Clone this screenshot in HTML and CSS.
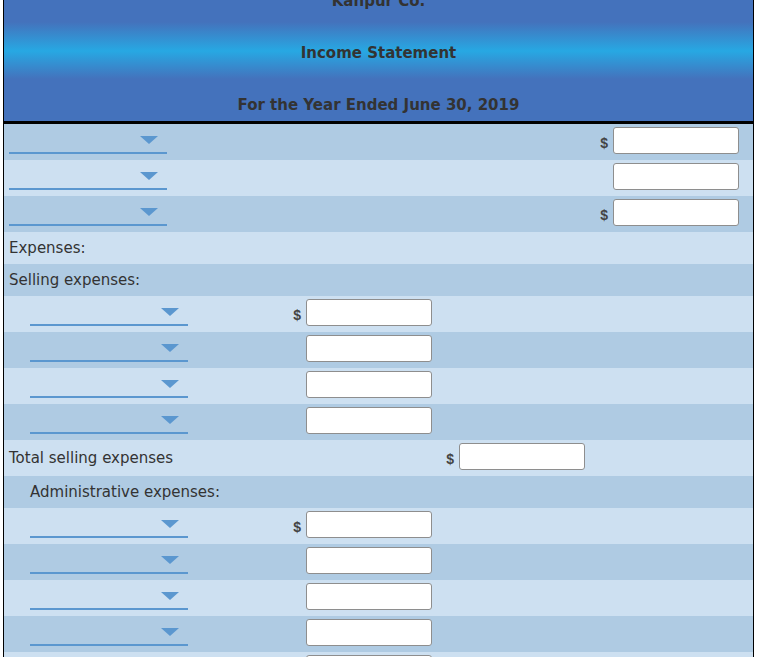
FILE: index.html
```html
<!DOCTYPE html>
<html>
<head>
<meta charset="utf-8">
<title>Income Statement</title>
<link rel="stylesheet" href="styles.css">
</head>
<body>
<div class="sheet">
  <div class="head">
    <div class="titles">
      <div class="title">Kanpur Co.</div>
      <div class="title">Income Statement</div>
      <div class="title">For the Year Ended June 30, 2019</div>
    </div>
  </div>
  <div class="rows">
    <div class="row">
      <div class="label"><div class="select"><span class="tri"></span></div></div>
      <div class="cell"></div><div class="cell"></div>
      <div class="cell"><span class="dollar">$</span><input class="amt" type="text"></div>
    </div>
    <div class="row">
      <div class="label"><div class="select"><span class="tri"></span></div></div>
      <div class="cell"></div><div class="cell"></div>
      <div class="cell"><input class="amt" type="text"></div>
    </div>
    <div class="row">
      <div class="label"><div class="select"><span class="tri"></span></div></div>
      <div class="cell"></div><div class="cell"></div>
      <div class="cell"><span class="dollar">$</span><input class="amt" type="text"></div>
    </div>
    <div class="row short">
      <div class="label"><span class="text">Expenses:</span></div>
    </div>
    <div class="row short">
      <div class="label"><span class="text">Selling expenses:</span></div>
    </div>
    <div class="row">
      <div class="label indent"><div class="select"><span class="tri"></span></div></div>
      <div class="cell"><span class="dollar">$</span><input class="amt" type="text"></div>
    </div>
    <div class="row">
      <div class="label indent"><div class="select"><span class="tri"></span></div></div>
      <div class="cell"><input class="amt" type="text"></div>
    </div>
    <div class="row">
      <div class="label indent"><div class="select"><span class="tri"></span></div></div>
      <div class="cell"><input class="amt" type="text"></div>
    </div>
    <div class="row">
      <div class="label indent"><div class="select"><span class="tri"></span></div></div>
      <div class="cell"><input class="amt" type="text"></div>
    </div>
    <div class="row">
      <div class="label"><span class="text">Total selling expenses</span></div>
      <div class="cell"></div>
      <div class="cell"><span class="dollar">$</span><input class="amt" type="text"></div>
    </div>
    <div class="row short">
      <div class="label indent"><span class="text">Administrative expenses:</span></div>
    </div>
    <div class="row">
      <div class="label indent"><div class="select"><span class="tri"></span></div></div>
      <div class="cell"><span class="dollar">$</span><input class="amt" type="text"></div>
    </div>
    <div class="row">
      <div class="label indent"><div class="select"><span class="tri"></span></div></div>
      <div class="cell"><input class="amt" type="text"></div>
    </div>
    <div class="row">
      <div class="label indent"><div class="select"><span class="tri"></span></div></div>
      <div class="cell"><input class="amt" type="text"></div>
    </div>
    <div class="row">
      <div class="label indent"><div class="select"><span class="tri"></span></div></div>
      <div class="cell"><input class="amt" type="text"></div>
    </div>
    <div class="row">
      <div class="label indent"><div class="select"><span class="tri"></span></div></div>
      <div class="cell"><input class="amt" type="text"></div>
    </div>
  </div>
</div>
</body>
</html>
```
FILE: styles.css
```css
html, body {
  margin: 0;
  padding: 0;
  background: #ffffff;
}

body {
  font-family: "DejaVu Sans", Verdana, sans-serif;
  color: #333333;
  overflow: hidden;
}

.sheet {
  margin-left: 3px;
  width: 751px;
  box-sizing: border-box;
  border-left: 1px solid #000;
  border-right: 1px solid #000;
}

.head {
  height: 121px;
  overflow: hidden;
  border-bottom: 3px solid #000;
  background: linear-gradient(to bottom,
    #4472bc 0px,
    #4472bc 22px,
    #27a8e3 51px,
    #4472bc 79px,
    #4472bc 121px);
}

.titles {
  margin-top: -25px;
  display: flex;
  flex-direction: column;
}

.title {
  height: 52px;
  line-height: 52px;
  text-align: center;
  font-weight: bold;
  font-size: 15px;
  color: #333333;
}

.rows {
  display: flex;
  flex-direction: column;
}

.row {
  display: grid;
  grid-template-columns: 1fr 153px 153px 154px;
  padding-right: 14px;
  height: 36px;
  box-sizing: border-box;
}

.row.short {
  height: 32px;
}

.row:nth-child(odd) {
  background: #afcbe3;
}

.row:nth-child(even) {
  background: #cde0f1;
}

.label {
  display: flex;
  align-items: center;
  padding-left: 5px;
  white-space: nowrap;
}

.label.indent {
  padding-left: 26px;
}

.text {
  font-size: 15px;
  color: #333333;
}

.select {
  align-self: flex-end;
  margin-bottom: 6px;
  width: 149px;
  height: 16px;
  border-bottom: 2px solid #5b97cf;
  display: flex;
  justify-content: flex-end;
  align-items: flex-start;
  padding-right: 9px;
  box-sizing: content-box;
}

.tri {
  width: 0;
  height: 0;
  border-left: 9px solid transparent;
  border-right: 9px solid transparent;
  border-top: 8px solid #5b97cf;
}

.cell {
  display: flex;
  justify-content: flex-end;
  align-items: flex-start;
  gap: 5px;
}

.dollar {
  font-family: "Liberation Sans", Arial, sans-serif;
  font-weight: bold;
  font-size: 14px;
  color: #444444;
  margin-top: 12px;
  line-height: 15px;
}

.amt {
  margin: 3px 0 0 0;
  width: 126px;
  height: 27px;
  box-sizing: border-box;
  border: 1px solid #8e8e8e;
  border-radius: 3px;
  background: #ffffff;
  padding: 0 4px;
  font-size: 13px;
  outline: none;
}
```
